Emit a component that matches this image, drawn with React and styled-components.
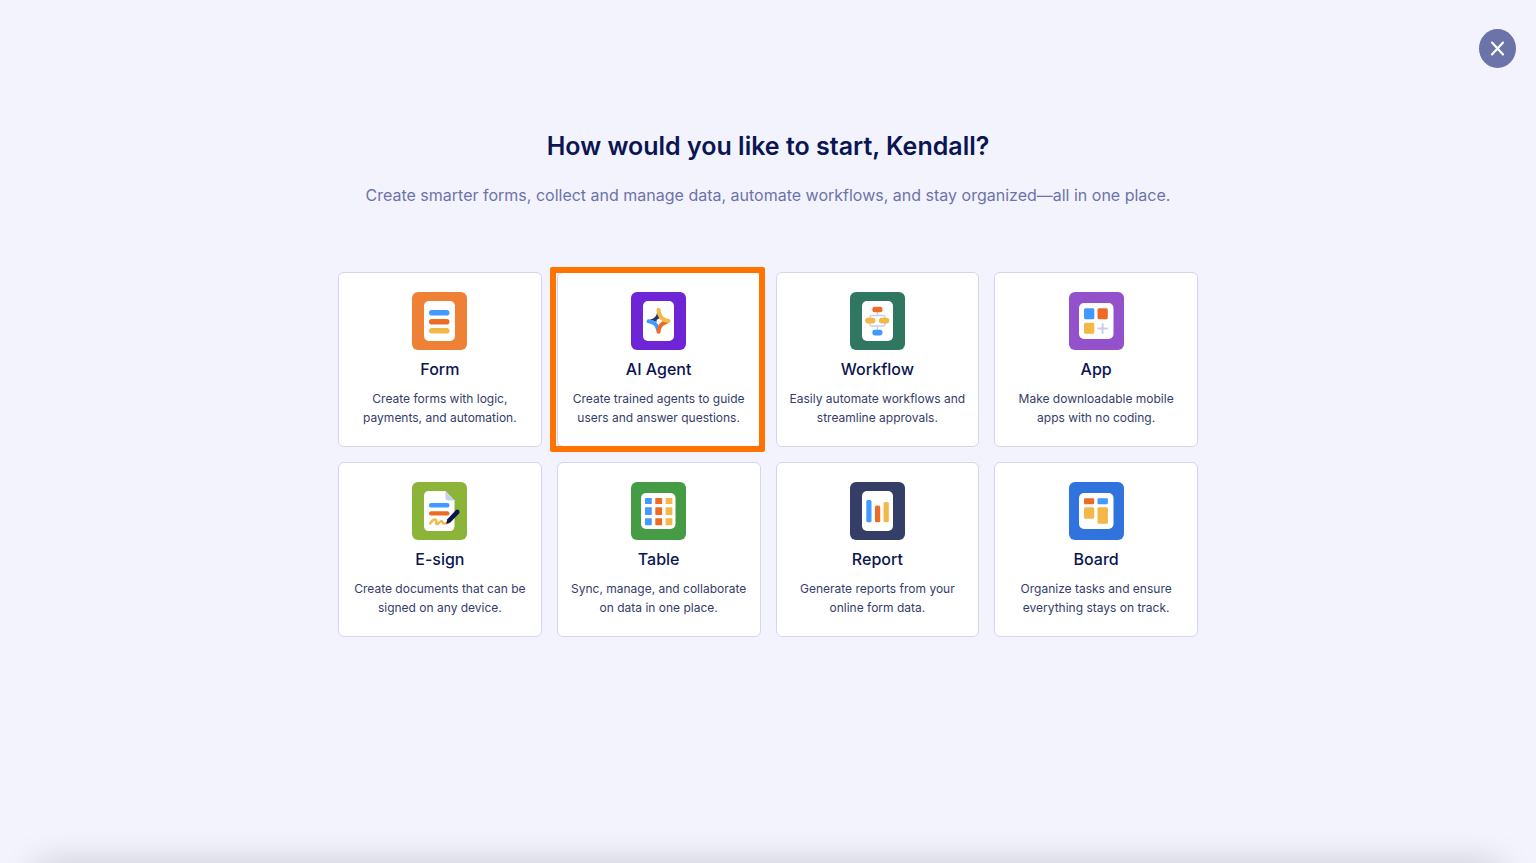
import React from "react";
import styled, { createGlobalStyle } from "styled-components";

const GlobalStyle = createGlobalStyle`
  *, *::before, *::after {
    box-sizing: border-box;
  }
  body {
    margin: 0;
    background: #f3f3fe;
    color: #0a1551;
    font-family: Inter, "Liberation Sans", sans-serif;
  }
`;

const Page = styled.div`
  min-height: 100vh;
`;
const TopBar = styled.header`
  display: flex;
  justify-content: flex-end;
  padding: 29px 20px 0;
`;
const CloseButton = styled.button`
  display: flex;
  align-items: center;
  justify-content: center;
  width: 37px;
  height: 39px;
  padding: 0;
  border: 0;
  border-radius: 50%;
  background: #6c73a8;
  cursor: pointer;
`;
const Main = styled.main`
  display: flex;
  flex-direction: column;
  align-items: center;
  padding: 60px 24px 48px;
`;
const Title = styled.h1`
  margin: 0;
  font-size: 25px;
  font-weight: 600;
  line-height: 36px;
  text-align: center;
`;
const Lead = styled.p`
  margin: 18px 0 0;
  color: #6c73a8;
  font-size: 16px;
  line-height: 26px;
  text-align: center;
`;
const Grid = styled.ul`
  display: grid;
  grid-template-columns: repeat(4, 1fr);
  gap: 15px;
  width: 100%;
  max-width: 860px;
  margin: 64px 0 0;
  padding: 0;
  list-style: none;
`;
const Item = styled.li`
  position: relative;
  display: flex;

  ${({ $highlighted }) => $highlighted && `
    &::after {
      content: "";
      position: absolute;
      inset: -5px -4px -5px -7px;
      border: 6px solid #ff7300;
      border-radius: 2px;
      pointer-events: none;
    }
  `}
`;
const Card = styled.button`
  display: flex;
  flex-direction: column;
  align-items: center;
  width: 100%;
  min-height: 175px;
  padding: 19px 8px;
  border: 1px solid #d5d6ee;
  border-radius: 6px;
  background: #fff;
  color: inherit;
  font-family: inherit;
  text-align: center;
  cursor: pointer;
`;
const CardTitle = styled.span`
  margin-top: 8px;
  font-size: 16px;
  font-weight: 500;
  line-height: 22px;
`;
const CardText = styled.span`
  margin-top: 9px;
  color: #343c6a;
  font-size: 12px;
  line-height: 19px;
  white-space: pre-line;
`;
const SheetShadow = styled.div`
  position: fixed;
  right: 36px;
  bottom: -80px;
  left: 36px;
  height: 80px;
  box-shadow: 0 0 34px rgba(0, 0, 0, 0.17);
  pointer-events: none;
`;

const BLUE = "#4299ff";
const ORANGE = "#ed6b24";
const YELLOW = "#f3b848";
const NAVY = "#0a1551";
const LILAC = "#c8ceed";

function Tile({ color, children }) {
  return (
    <svg width="55" height="58" viewBox="0 0 55 58" fill="none" aria-hidden="true">
      <rect width="55" height="58" rx="6" fill={color} />
      {children}
    </svg>
  );
}

const Sheet = () => <rect x="12" y="9" width="31" height="40" rx="5" fill="#fff" />;
const Square = () => <rect x="10" y="11" width="34.5" height="36" rx="5" fill="#fff" />;

function FormIcon() {
  return (
    <Tile color="#ef8137">
      <Sheet />
      <rect x="17" y="18" width="20.5" height="5.6" rx="2.8" fill={BLUE} />
      <rect x="17" y="27" width="20.5" height="5.6" rx="2.8" fill={ORANGE} />
      <rect x="17" y="36" width="20.5" height="5.6" rx="2.8" fill={YELLOW} />
    </Tile>
  );
}

function AgentIcon() {
  return (
    <Tile color="#6d25d5">
      <Sheet />
      <path d="M26 20.5C25.5 24.5 23 26.8 18.5 27.6L26 30L28.5 25Z" fill="#2b3563" />
      <path d="M17.5 29.2C23 29.8 26.3 33 27 37.5" stroke={BLUE} strokeWidth="4" strokeLinecap="round" />
      <path d="M27.5 39.8C27.8 34.8 30.5 31.3 35.5 30" stroke={ORANGE} strokeWidth="4" strokeLinecap="round" />
      <path d="M27.5 18C27.9 24.3 31.5 28.3 37.5 29" stroke={YELLOW} strokeWidth="4" strokeLinecap="round" />
      <circle cx="27.4" cy="28.9" r="1.9" fill="#fff" />
    </Tile>
  );
}

function WorkflowIcon() {
  return (
    <Tile color="#307762">
      <Sheet />
      <path
        d="M27.5 20V23.5M20 28V25.5Q20 23.5 22 23.5H33Q35 23.5 35 25.5V28M20 30V32Q20 34 22 34H33Q35 34 35 32V30M27.5 34V38"
        stroke={LILAC}
        strokeWidth="1.4"
      />
      <rect x="22.3" y="14.7" width="10.2" height="5.6" rx="2.4" fill={ORANGE} />
      <rect x="15.2" y="25.8" width="10.2" height="5.6" rx="2.6" fill={YELLOW} />
      <rect x="29" y="25.8" width="10.2" height="5.6" rx="2.6" fill={YELLOW} />
      <rect x="22.3" y="37.8" width="10.2" height="5.6" rx="2.4" fill={BLUE} />
    </Tile>
  );
}

function AppIcon() {
  return (
    <Tile color="#9351cb">
      <Square />
      <rect x="15" y="16.3" width="10.3" height="11" rx="1.5" fill={BLUE} />
      <rect x="28.5" y="16.3" width="10.3" height="11" rx="1.5" fill={ORANGE} />
      <rect x="15" y="30.8" width="10.3" height="11" rx="1.5" fill={YELLOW} />
      <path d="M33.6 32V41M29.3 36.5H38" stroke={LILAC} strokeWidth="2" strokeLinecap="round" />
    </Tile>
  );
}

function SignIcon() {
  return (
    <Tile color="#8bb438">
      <path d="M17 9H33.5L42.5 18.5V44Q42.5 49 37.5 49H17Q12 49 12 44V14Q12 9 17 9Z" fill="#fff" />
      <path d="M33.5 9L42.5 18.5H36.5Q33.5 18.5 33.5 15.5Z" fill={LILAC} />
      <rect x="17" y="21" width="20.5" height="4.6" rx="2.2" fill={BLUE} />
      <rect x="17" y="29.2" width="20.5" height="4.4" rx="2.2" fill={ORANGE} />
      <path
        d="M18.2 41.5C20.2 38 22.8 36.6 24 37.8C25.2 39 23 41.4 24.7 42C26.5 42.5 28 38.4 29.8 39.2C31.1 39.9 30 41.6 32 41.6C33.4 41.6 34 40.9 36 40.9"
        stroke={YELLOW}
        strokeWidth="2.4"
        strokeLinecap="round"
      />
      <path d="M43.5 28.4C44.7 27.2 46.2 27.5 47 28.4C47.8 29.3 47.8 30.6 46.8 31.7L38.3 40.5L34.2 42L35.3 37.2Z" fill={NAVY} />
    </Tile>
  );
}

function TableIcon() {
  return (
    <Tile color="#469c44">
      <Square />
      {[BLUE, ORANGE, YELLOW].map((color, col) => (
        <g key={color} fill={color}>
          <rect x={14 + col * 10.3} y="16" width="6.8" height="6" rx="0.6" />
          <rect x={14 + col * 10.3} y="25.3" width="6.8" height="7.6" rx="0.6" />
          <rect x={14 + col * 10.3} y="36.2" width="6.8" height="7" rx="0.6" />
        </g>
      ))}
    </Tile>
  );
}

function ReportIcon() {
  return (
    <Tile color="#353e66">
      <Sheet />
      <rect x="16.3" y="18" width="5.2" height="22.3" rx="1.6" fill={BLUE} />
      <rect x="25" y="23.5" width="5.2" height="16.8" rx="1.6" fill={ORANGE} />
      <rect x="33.6" y="20" width="5.2" height="20.3" rx="1.6" fill={YELLOW} />
    </Tile>
  );
}

function BoardIcon() {
  return (
    <Tile color="#3073dc">
      <Square />
      <rect x="15" y="16.2" width="10.2" height="6" rx="1.2" fill={ORANGE} />
      <rect x="28.5" y="16.2" width="10.4" height="6" rx="1.2" fill={BLUE} />
      <rect x="15" y="25.2" width="10.2" height="11.6" rx="1.4" fill={YELLOW} />
      <rect x="28.5" y="25.2" width="10.4" height="16.6" rx="1.4" fill={YELLOW} />
    </Tile>
  );
}

const PRODUCTS = [
  { name: "Form", text: "Create forms with logic,\npayments, and automation.", icon: FormIcon },
  { name: "AI Agent", text: "Create trained agents to guide\nusers and answer questions.", icon: AgentIcon, highlighted: true },
  { name: "Workflow", text: "Easily automate workflows and\nstreamline approvals.", icon: WorkflowIcon },
  { name: "App", text: "Make downloadable mobile\napps with no coding.", icon: AppIcon },
  { name: "E-sign", text: "Create documents that can be\nsigned on any device.", icon: SignIcon },
  { name: "Table", text: "Sync, manage, and collaborate\non data in one place.", icon: TableIcon },
  { name: "Report", text: "Generate reports from your\nonline form data.", icon: ReportIcon },
  { name: "Board", text: "Organize tasks and ensure\neverything stays on track.", icon: BoardIcon },
];

/**
 * Product picker
 */
export default function App() {
  return (
    <>
      <GlobalStyle />
      <Page>
        <TopBar>
          <CloseButton type="button" aria-label="Close">
            <svg width="15" height="15" viewBox="0 0 15 15" aria-hidden="true">
              <path d="M2 1.6L13 13.4M13 1.6L2 13.4" stroke="#fff" strokeWidth="2.2" strokeLinecap="round" />
            </svg>
          </CloseButton>
        </TopBar>
        <Main>
          <Title>How would you like to start, Kendall?</Title>
          <Lead>Create smarter forms, collect and manage data, automate workflows, and stay organized—all in one place.</Lead>
          <Grid>
            {PRODUCTS.map(({ name, text, icon: Icon, highlighted }) => (
              <Item key={name} $highlighted={highlighted}>
                <Card type="button">
                  <Icon />
                  <CardTitle>{name}</CardTitle>
                  <CardText>{text}</CardText>
                </Card>
              </Item>
            ))}
          </Grid>
        </Main>
      </Page>
      <SheetShadow />
    </>
  );
}
